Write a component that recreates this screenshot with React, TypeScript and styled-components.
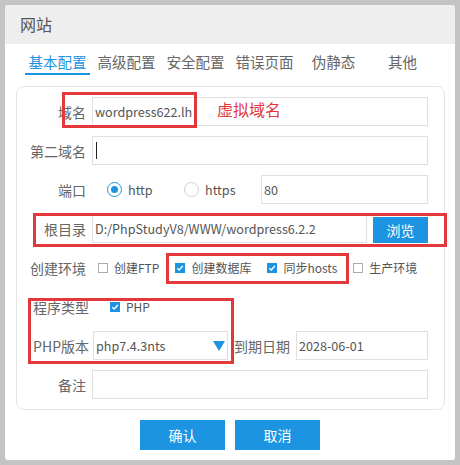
import React from 'react'
import styled, { createGlobalStyle } from 'styled-components'

const FONT = `"Noto Sans CJK SC", "Noto Sans", sans-serif`
const BLUE = '#1c94e2'
const RED = '#e2383c'

const GlobalStyle = createGlobalStyle`
  html, body { margin: 0; padding: 0; }
  body { background: #c4c4c4; font-family: ${FONT}; }
`

const Backdrop = styled.div`
  width: 460px;
  height: 465px;
  box-sizing: border-box;
  padding: 5px;
`

const Dialog = styled.div`
  width: 450px;
  height: 455px;
  background: #fff;
  border-radius: 3px;
  overflow: hidden;
  display: flex;
  flex-direction: column;
`

const Header = styled.div`
  height: 39px;
  line-height: 39px;
  padding-left: 15px;
  background: #eeeeee;
  color: #555;
  font-size: 16px;
`

const TabBar = styled.div`
  display: flex;
  gap: 4px;
  padding-left: 20px;
`

const Tab = styled.div<{ $active?: boolean }>`
  width: 65px;
  height: 31px;
  box-sizing: border-box;
  padding-top: 6px;
  line-height: 23px;
  text-align: center;
  font-size: 14.5px;
  color: ${p => (p.$active ? BLUE : '#666')};
  border-bottom: 2px solid ${p => (p.$active ? BLUE : 'transparent')};
`

const Panel = styled.div`
  position: relative;
  margin: 11px 10px 0 11px;
  border: 1px solid #e4e4e4;
  border-radius: 8px;
  padding: 10px 16px 10px 0;
  display: flex;
  flex-direction: column;
  gap: 10px;
`

const Row = styled.div`
  display: flex;
  align-items: center;
  height: 29px;
`

const Label = styled.div<{ $wide?: boolean }>`
  width: ${p => (p.$wide ? 72 : 69)}px;
  margin-right: ${p => (p.$wide ? 4 : 6)}px;
  flex-shrink: 0;
  text-align: right;
  font-size: 14px;
  color: #666;
  white-space: nowrap;
`

const InlineLabel = styled.div`
  margin: 0 6px;
  font-size: 14px;
  color: #666;
  white-space: nowrap;
`

const Field = styled.div<{ $width?: number }>`
  ${p => (p.$width ? `width: ${p.$width}px;` : 'flex: 1;')}
  height: 29px;
  box-sizing: border-box;
  border: 1px solid #e0e0e0;
  padding: 0 2px;
  display: flex;
  align-items: center;
  font-size: 12.6px;
  color: #555;
  white-space: nowrap;
  overflow: hidden;
`

const Caret = styled.span`
  display: inline-block;
  width: 1px;
  height: 17px;
  background: #222;
  margin-left: 1px;
`

const SelectArrow = styled.svg`
  margin-left: auto;
`

const RadioGroup = styled.div`
  display: flex;
  margin-left: 15px;
`

const RadioItem = styled.div`
  width: 77px;
  display: flex;
  align-items: center;
  gap: 6px;
  font-size: 12.6px;
  color: #555;
`

const RadioDot = styled.span<{ $checked?: boolean }>`
  width: 15px;
  height: 15px;
  box-sizing: border-box;
  border-radius: 50%;
  border: 1px solid ${p => (p.$checked ? BLUE : '#d0d0d0')};
  display: flex;
  align-items: center;
  justify-content: center;
  &::after {
    content: '';
    width: 7px;
    height: 7px;
    border-radius: 50%;
    background: ${p => (p.$checked ? BLUE : 'transparent')};
  }
`

const CheckGroup = styled.div<{ $offset: number }>`
  display: flex;
  align-items: center;
  gap: 16px;
  margin-left: ${p => p.$offset}px;
`

const CheckItem = styled.div`
  display: flex;
  align-items: center;
  gap: 6px;
  font-size: 12px;
  color: #555;
  white-space: nowrap;
`

const Box = styled.span<{ $checked?: boolean }>`
  width: 10px;
  height: 10px;
  box-sizing: border-box;
  border: 1px solid ${p => (p.$checked ? BLUE : '#aaa')};
  background: ${p => (p.$checked ? BLUE : '#fff')};
  display: flex;
  align-items: center;
  justify-content: center;
`

const BrowseButton = styled.div`
  width: 55px;
  height: 26px;
  margin-left: 6px;
  align-self: flex-end;
  background: ${BLUE};
  color: #fff;
  font-size: 14px;
  display: flex;
  align-items: center;
  justify-content: center;
`

const Annotation = styled.div`
  position: absolute;
  box-sizing: border-box;
  border: 3px solid ${RED};
  pointer-events: none;
`

const AnnotationText = styled.div`
  position: absolute;
  left: 200px;
  top: 12px;
  font-size: 16px;
  line-height: 20px;
  color: ${RED};
  white-space: nowrap;
`

const Footer = styled.div`
  display: flex;
  justify-content: center;
  gap: 10px;
  margin-top: 10px;
`

const ActionButton = styled.div`
  width: 85px;
  height: 30px;
  background: ${BLUE};
  color: #fff;
  font-size: 14px;
  display: flex;
  align-items: center;
  justify-content: center;
`

const tabs = ['基本配置', '高级配置', '安全配置', '错误页面', '伪静态', '其他']

// red boxes drawn over the form, relative to the panel
const boxes = [
  { left: 45, top: 5, width: 135, height: 36 },
  { left: 16, top: 126, width: 414, height: 34 },
  { left: 149, top: 166, width: 183, height: 31 },
  { left: 11, top: 211, width: 206, height: 66 },
]

const Check = ({ checked, label }: { checked?: boolean; label: string }) => (
  <CheckItem>
    <Box $checked={checked}>
      {checked && (
        <svg width="8" height="8" viewBox="0 0 8 8">
          <path d="M1.3 4.2 L3.2 6 L6.8 2" fill="none" stroke="#fff" strokeWidth="1.4" />
        </svg>
      )}
    </Box>
    {label}
  </CheckItem>
)

const App = () => (
  <>
    <GlobalStyle />
    <Backdrop>
      <Dialog>
        <Header>网站</Header>
        <TabBar>
          {tabs.map((t, i) => (
            <Tab key={t} $active={i === 0}>{t}</Tab>
          ))}
        </TabBar>
        <Panel>
          <Row>
            <Label>域名</Label>
            <Field>wordpress622.lh</Field>
          </Row>
          <Row>
            <Label>第二域名</Label>
            <Field><Caret /></Field>
          </Row>
          <Row>
            <Label>端口</Label>
            <RadioGroup>
              <RadioItem><RadioDot $checked />http</RadioItem>
              <RadioItem><RadioDot />https</RadioItem>
            </RadioGroup>
            <Field>80</Field>
          </Row>
          <Row>
            <Label>根目录</Label>
            <Field>D:/PhpStudyV8/WWW/wordpress6.2.2</Field>
            <BrowseButton>浏览</BrowseButton>
          </Row>
          <Row>
            <Label>创建环境</Label>
            <CheckGroup $offset={6}>
              <Check label="创建FTP" />
              <Check checked label="创建数据库" />
              <Check checked label="同步hosts" />
              <Check label="生产环境" />
            </CheckGroup>
          </Row>
          <Row>
            <Label $wide>程序类型</Label>
            <CheckGroup $offset={17}>
              <Check checked label="PHP" />
            </CheckGroup>
          </Row>
          <Row>
            <Label $wide>PHP版本</Label>
            <Field $width={135}>
              php7.4.3nts
              <SelectArrow width="12" height="10" viewBox="0 0 12 10">
                <path d="M0 0 H12 L6 10 Z" fill={BLUE} />
              </SelectArrow>
            </Field>
            <InlineLabel>到期日期</InlineLabel>
            <Field>2028-06-01</Field>
          </Row>
          <Row>
            <Label>备注</Label>
            <Field />
          </Row>
          {boxes.map((b, i) => (
            <Annotation key={i} style={b} />
          ))}
          <AnnotationText>虚拟域名</AnnotationText>
        </Panel>
        <Footer>
          <ActionButton>确认</ActionButton>
          <ActionButton>取消</ActionButton>
        </Footer>
      </Dialog>
    </Backdrop>
  </>
)

export default App
